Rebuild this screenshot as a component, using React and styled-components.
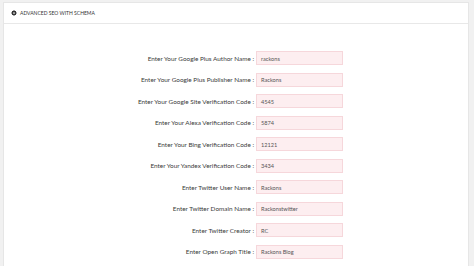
import React from 'react';
import styled, { createGlobalStyle } from 'styled-components';

const Global = createGlobalStyle`
  html, body { margin: 0; padding: 0; background: #f1f1f1; }
  body { font-family: Lato, "Liberation Sans", sans-serif; }
`;

const Page = styled.div`
  padding: 2px 5px 0 3px;
  height: 266px;
  box-sizing: border-box;
  overflow: hidden;
`;

const Panel = styled.div`
  background: #fff;
  border: 1px solid #e6e6e6;
  height: 100%;
`;

const Header = styled.div`
  display: flex;
  align-items: center;
  gap: 3px;
  height: 20px;
  padding: 0 7px;
  border-bottom: 1px solid #e8e8e8;
  font-size: 5px;
  color: #333;
  text-transform: uppercase;
`;

const Form = styled.div`
  display: grid;
  grid-template-columns: 252px 87px;
  row-gap: 7.5px;
  padding-top: 27px;
  align-items: center;
`;

const Label = styled.label`
  text-align: right;
  font-size: 6.4px;
  color: #3a3a3a;
  padding-right: 2px;
`;

const Input = styled.div`
  height: 14px;
  box-sizing: border-box;
  background: #fdeef0;
  border: 1px solid #f6d7db;
  font-size: 5.6px;
  color: #555;
  display: flex;
  align-items: center;
  padding-left: 4px;
`;

const Gear = () => (
  <svg width="6" height="6" viewBox="0 0 10 10">
    <circle cx="5" cy="5" r="3.6" fill="#333" />
    <g stroke="#333" strokeWidth="1.6">
      <line x1="5" y1="0.3" x2="5" y2="9.7" />
      <line x1="0.3" y1="5" x2="9.7" y2="5" />
      <line x1="1.7" y1="1.7" x2="8.3" y2="8.3" />
      <line x1="8.3" y1="1.7" x2="1.7" y2="8.3" />
    </g>
    <circle cx="5" cy="5" r="1.4" fill="#fff" />
  </svg>
);

const rows = [
  ['Enter Your Google Plus Author Name', 'rackons'],
  ['Enter Your Google Plus Publisher Name', 'Rackons'],
  ['Enter Your Google Site Verification Code', '4545'],
  ['Enter Your Alexa Verification Code', '5874'],
  ['Enter Your Bing Verification Code', '12121'],
  ['Enter Your Yandex Verification Code', '3434'],
  ['Enter Twitter User Name', 'Rackons'],
  ['Enter Twitter Domain Name', 'Rackonstwitter'],
  ['Enter Twitter Creator', 'RC'],
  ['Enter Open Graph Title', 'Rackons Blog'],
];

export default function App() {
  return (
    <Page>
      <Global />
      <Panel>
        <Header>
          <Gear />
          <span>Advanced SEO with Schema</span>
        </Header>
        <Form>
          {rows.map(([label, value]) => (
            <React.Fragment key={label}>
              <Label>{label} :</Label>
              <Input>{value}</Input>
            </React.Fragment>
          ))}
        </Form>
      </Panel>
    </Page>
  );
}
